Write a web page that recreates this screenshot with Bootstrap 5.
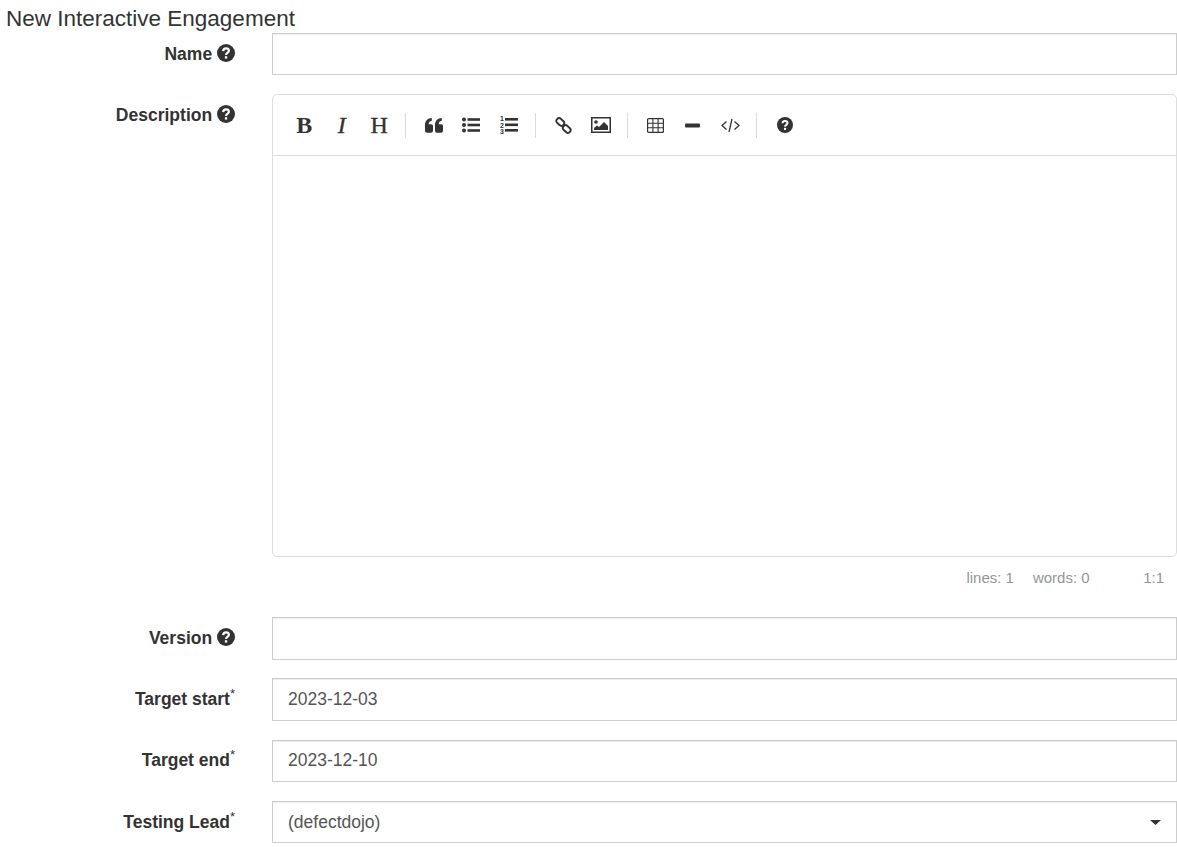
<!DOCTYPE html>
<html lang="en">
<head>
<meta charset="utf-8">
<title>New Interactive Engagement</title>
<link rel="stylesheet" href="https://cdn.jsdelivr.net/npm/bootstrap@5.3.0/dist/css/bootstrap.min.css">
<style>
html, body { overflow: hidden; }
body { font-family: "Liberation Sans", Arial, sans-serif; font-size: 17.5px; line-height: 25px; color: #333; background: #fff; }
.page-title { font-family: "Liberation Sans", Arial, sans-serif; font-size: 22.5px; line-height: 25px; font-weight: 400; color: #333; margin: 6px 0 1.75px 6px; }
.field-row { margin-bottom: 18.75px; }
.field-label { flex: 0 0 235px; padding-top: 8.75px; font-weight: 700; font-size: 17.5px; line-height: 25px; text-align: right; margin: 0; color: #333; }
.field-body { flex: 1 1 auto; margin-left: 37px; min-width: 0; }
.help-icon { width: 18px; height: 18px; vertical-align: -2px; }
.req { font-weight: 400; font-size: 13px; line-height: 0; vertical-align: 7px; top: 0; }
.plain-input.form-control, .plain-select.form-select { height: 42.5px; border: 1px solid #ccc; border-radius: 0; box-shadow: inset 0 1px 1px rgba(0,0,0,.075); color: #555; font-size: 17.5px; line-height: 25px; padding: 8px 15px; }
.plain-select.form-select { background-image: url("data:image/svg+xml,%3Csvg xmlns='http://www.w3.org/2000/svg' width='11' height='5'%3E%3Cpath d='M0 0h11L5.500 5z' fill='%23333'/%3E%3C/svg%3E"); background-size: 11px 5px; background-position: right 15px center; }
.editor-box { height: 463px; border: 1px solid #ddd; border-radius: 5px; overflow: hidden; }
.editor-bar { height: 61px; padding: 0 12.500px; border-bottom: 1px solid #ddd; }
.tool-btn { flex: 0 0 37.500px; height: 37.500px; color: #2c3e50; }
.tool-btn svg { display: block; }
.serif-tool { font-family: "Liberation Serif", "Times New Roman", serif; font-size: 24px; line-height: 1; color: #333; -webkit-text-stroke: .35px #333; }
.serif-bold { -webkit-text-stroke: 0; }
.tool-sep { flex: 0 0 auto; width: 1px; height: 25px; background: #d9d9d9; margin: 0 8.75px 0 7.25px; }
.status-line { color: #959694; font-size: 15px; line-height: 20px; padding: 11px 13px 0 0; height: 60.100px; }
.status-line span + span { margin-left: 19px; }
.status-line .pos-cell { margin-left: 53.500px; }
</style>
</head>
<body>
<svg width="0" height="0" class="d-block position-absolute">
  <symbol id="q" viewBox="0 0 24 24">
    <circle cx="12" cy="12" r="12" fill="#333"/>
    <path d="M8.200 9.400c.2-2.200 1.800-3.500 3.900-3.500 2.200 0 3.700 1.300 3.700 3.100 0 1.500-.9 2.200-2 2.900-1 .6-1.700 1.200-1.700 2.700" fill="none" stroke="#fff" stroke-width="2.900"/>
    <rect x="10.500" y="16.300" width="3.100" height="3.100" fill="#fff"/>
  </symbol>
</svg>

<h1 class="page-title">New Interactive Engagement</h1>

<form>
  <div class="field-row d-flex">
    <label class="field-label" for="f-name">Name <svg class="help-icon"><use href="#q"/></svg></label>
    <div class="field-body"><input id="f-name" class="form-control plain-input" type="text"></div>
  </div>

  <div class="field-row d-flex mb-0">
    <label class="field-label">Description <svg class="help-icon"><use href="#q"/></svg></label>
    <div class="field-body">
      <div class="editor-box">
        <div class="editor-bar d-flex align-items-center">
          <div class="tool-btn serif-tool serif-bold d-flex align-items-center justify-content-center fw-bold">B</div>
          <div class="tool-btn serif-tool d-flex align-items-center justify-content-center fst-italic">I</div>
          <div class="tool-btn serif-tool d-flex align-items-center justify-content-center">H</div>
          <div class="tool-sep"></div>
          <div class="tool-btn d-flex align-items-center justify-content-center">
            <svg width="18" height="17" viewBox="0 0 18 17" fill="#333"><path d="M8 9.500v4.200a2 2 0 0 1-2 2H2a2 2 0 0 1-2-2V7.800C0 4 2.600 1.200 6.800 1v2.700C4.800 4 3.700 5.100 3.600 7.300H6a2 2 0 0 1 2 2.200zM18 9.500v4.200a2 2 0 0 1-2 2h-4a2 2 0 0 1-2-2V7.800C10 4 12.600 1.200 16.800 1v2.700c-2 .3-3.100 1.400-3.200 3.600H16a2 2 0 0 1 2 2.200z"/></svg>
          </div>
          <div class="tool-btn d-flex align-items-center justify-content-center">
            <svg width="18" height="16" viewBox="0 0 18 16" fill="#333"><circle cx="2" cy="2.500" r="2"/><circle cx="2" cy="8" r="2"/><circle cx="2" cy="13.500" r="2"/><rect x="5.500" y="1.200" width="12.500" height="2.600"/><rect x="5.500" y="6.700" width="12.500" height="2.600"/><rect x="5.500" y="12.200" width="12.500" height="2.600"/></svg>
          </div>
          <div class="tool-btn d-flex align-items-center justify-content-center">
            <svg width="18" height="20" viewBox="0 0 18 20" fill="#333"><text x="0" y="6" font-family="Liberation Sans, sans-serif" font-weight="700" font-size="7">1</text><text x="0" y="12.500" font-family="Liberation Sans, sans-serif" font-weight="700" font-size="7">2</text><text x="0" y="19" font-family="Liberation Sans, sans-serif" font-weight="700" font-size="7">3</text><rect x="5" y="3" width="13" height="2.600"/><rect x="5" y="8.500" width="13" height="2.600"/><rect x="5" y="14" width="13" height="2.600"/></svg>
          </div>
          <div class="tool-sep"></div>
          <div class="tool-btn d-flex align-items-center justify-content-center">
            <svg width="17" height="17" viewBox="0 0 18 18" fill="none" stroke="#333" stroke-width="2"><rect x="1.100" y="2.400" width="9" height="5.800" rx="2.900" transform="rotate(42 5.600 5.300)"/><rect x="7.900" y="9.800" width="9" height="5.800" rx="2.900" transform="rotate(42 12.400 12.700)"/></svg>
          </div>
          <div class="tool-btn d-flex align-items-center justify-content-center">
            <svg width="20" height="16" viewBox="0 0 20 16"><rect x=".75" y=".75" width="18.500" height="14.500" fill="#fff" stroke="#333" stroke-width="1.500"/><circle cx="5" cy="5" r="1.800" fill="#333"/><path d="M3 13v-2l3-2.500 2 1.500 5-5 4 4v4z" fill="#333"/></svg>
          </div>
          <div class="tool-sep"></div>
          <div class="tool-btn d-flex align-items-center justify-content-center">
            <svg width="17" height="15" viewBox="0 0 17 15" fill="none" stroke="#333"><rect x=".6" y=".6" width="15.800" height="13.800" rx="1" stroke-width="1.200"/><path d="M5.900 1v13M11.100 1v13M1 5.200h15M1 9.800h15" stroke-width="1.100"/></svg>
          </div>
          <div class="tool-btn d-flex align-items-center justify-content-center">
            <svg width="15" height="5" viewBox="0 0 15 5"><rect width="15" height="4" y=".5" rx="1" fill="#333"/></svg>
          </div>
          <div class="tool-btn d-flex align-items-center justify-content-center">
            <svg width="19" height="15" viewBox="0 0 19 15" fill="none" stroke="#333" stroke-width="1.300"><path d="M5.500 3.500 1 7.500l4.500 4M13.500 3.500l4.500 4-4.500 4M11 1 8 14"/></svg>
          </div>
          <div class="tool-sep"></div>
          <div class="tool-btn d-flex align-items-center justify-content-center">
            <svg width="16" height="16"><use href="#q"/></svg>
          </div>
        </div>
      </div>
      <div class="status-line text-end"><span>lines: 1</span><span>words: 0</span><span class="pos-cell">1:1</span></div>
    </div>
  </div>

  <div class="field-row d-flex">
    <label class="field-label" for="f-version">Version <svg class="help-icon"><use href="#q"/></svg></label>
    <div class="field-body"><input id="f-version" class="form-control plain-input" type="text"></div>
  </div>

  <div class="field-row d-flex">
    <label class="field-label" for="f-start">Target start<sup class="req">*</sup></label>
    <div class="field-body"><input id="f-start" class="form-control plain-input" type="text" value="2023-12-03"></div>
  </div>

  <div class="field-row d-flex">
    <label class="field-label" for="f-end">Target end<sup class="req">*</sup></label>
    <div class="field-body"><input id="f-end" class="form-control plain-input" type="text" value="2023-12-10"></div>
  </div>

  <div class="field-row d-flex">
    <label class="field-label" for="f-lead">Testing Lead<sup class="req">*</sup></label>
    <div class="field-body">
      <select id="f-lead" class="form-select plain-select"><option>(defectdojo)</option></select>
    </div>
  </div>
</form>

<script src="https://cdn.jsdelivr.net/npm/bootstrap@5.3.0/dist/js/bootstrap.bundle.min.js"></script>
</body>
</html>
